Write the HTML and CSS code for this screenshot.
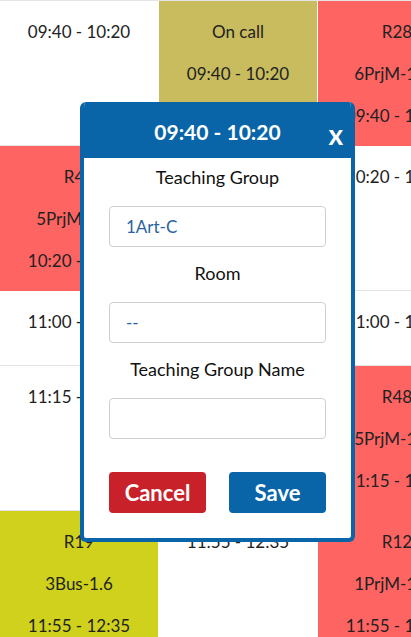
FILE: index.html
```html
<!DOCTYPE html>
<html>
<head>
<meta charset="utf-8">
<link rel="stylesheet" href="styles.css">
</head>
<body>
<div class="timetable">
  <div class="cell"><span>09:40 - 10:20</span></div>
  <div class="cell olive"><span>On call</span><span>09:40 - 10:20</span></div>
  <div class="cell red"><span>R28</span><span>6PrjM-1.11</span><span>09:40 - 10:20</span></div>

  <div class="cell red"><span>R41</span><span>5PrjM-1.11</span><span>10:20 - 11:00</span></div>
  <div class="cell"><span>10:20 - 11:00</span></div>
  <div class="cell"><span>10:20 - 11:00</span></div>

  <div class="cell"><span>11:00 - 11:15</span></div>
  <div class="cell"><span>11:00 - 11:15</span></div>
  <div class="cell"><span>11:00 - 11:15</span></div>

  <div class="cell"><span>11:15 - 11:55</span></div>
  <div class="cell"><span>11:15 - 11:55</span></div>
  <div class="cell red"><span>R48</span><span>5PrjM-1.11</span><span>11:15 - 11:55</span></div>

  <div class="cell lime"><span>R19</span><span>3Bus-1.6</span><span>11:55 - 12:35</span></div>
  <div class="cell"><span>11:55 - 12:35</span></div>
  <div class="cell red"><span>R12</span><span>1PrjM-1.11</span><span>11:55 - 12:35</span></div>
</div>

<div class="modal">
  <div class="modal-header">
    <span class="modal-title">09:40 - 10:20</span>
    <span class="modal-close">x</span>
  </div>
  <div class="modal-body">
    <div class="field-label">Teaching Group</div>
    <div class="field-input">1Art-C</div>
    <div class="field-label">Room</div>
    <div class="field-input">--</div>
    <div class="field-label">Teaching Group Name</div>
    <div class="field-input"></div>
    <div class="actions">
      <button class="btn btn-cancel">Cancel</button>
      <button class="btn btn-save">Save</button>
    </div>
  </div>
</div>
</body>
</html>
```
FILE: styles.css
```css
html, body {
  margin: 0;
  padding: 0;
  background: #ffffff;
  overflow: hidden;
  width: 411px;
  height: 637px;
}

body {
  font-family: Lato, "Open Sans", sans-serif;
  color: #222222;
  position: relative;
}

.timetable {
  display: grid;
  grid-template-columns: 158px 158px 158px;
  grid-template-rows: 145px 145px 75px 145px 145px;
  column-gap: 1px;
  border-top: 1px solid #e4e4e4;
  width: 476px;
}

.cell {
  box-sizing: border-box;
  border-bottom: 1px solid #e4e4e4;
  display: flex;
  flex-direction: column;
  align-items: center;
  gap: 18px;
  padding-top: 19px;
  font-size: 17px;
  line-height: 24px;
  white-space: nowrap;
  background: #ffffff;
}

.olive { background: #c8bc5e; border-bottom-color: #c8bc5e; }
.red { background: #fe6462; border-bottom-color: #fe6462; }
.lime { background: #cfd11c; border-bottom-color: #cfd11c; }

.modal {
  position: absolute;
  left: 80px;
  top: 102px;
  width: 275px;
  height: 440px;
  box-sizing: border-box;
  border: 4px solid #0a65a8;
  border-top: 0;
  border-radius: 6px;
  background: #ffffff;
  overflow: hidden;
}

.modal-header {
  height: 56px;
  background: #0a65a8;
  color: #ffffff;
  position: relative;
  display: flex;
  align-items: center;
  justify-content: center;
  margin: 0 -4px;
}

.modal-title {
  font-weight: 700;
  font-size: 21px;
  padding-top: 3px;
}

.modal-close {
  position: absolute;
  right: 12px;
  top: 18px;
  font-weight: 700;
  font-size: 28px;
  line-height: 28px;
}

.modal-body {
  padding: 7px 25px 0;
  display: flex;
  flex-direction: column;
}

.field-label {
  text-align: center;
  font-size: 18px;
  line-height: 24px;
  color: #111111;
}

.field-input {
  box-sizing: border-box;
  height: 41px;
  margin: 17px 0 14px;
  border: 1px solid #cfcfcf;
  border-radius: 4px;
  padding: 0 16px;
  font-size: 17px;
  line-height: 39px;
  color: #2a63a0;
}

.actions {
  display: flex;
  justify-content: space-between;
  margin-top: 19px;
}

.btn {
  width: 97px;
  height: 41px;
  border: 0;
  border-radius: 4px;
  color: #ffffff;
  font-family: Lato, "Open Sans", sans-serif;
  font-weight: 700;
  font-size: 22px;
  line-height: 41px;
  padding: 0;
}

.btn-cancel { background: #c9212a; }
.btn-save { background: #0a65a8; }
```
